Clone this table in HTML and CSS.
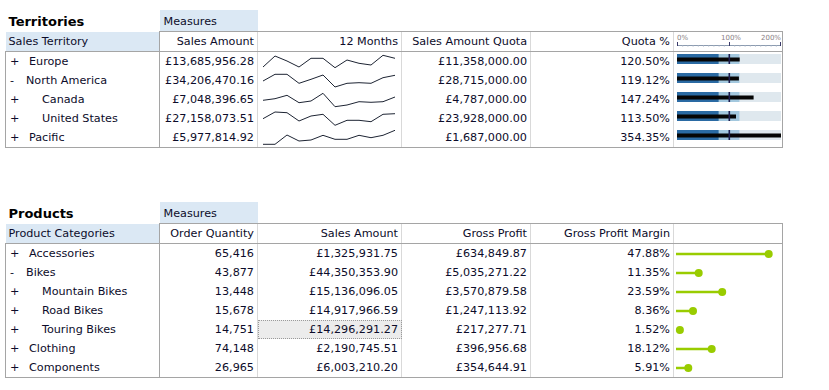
FILE: index.html
```html
<!DOCTYPE html>
<html lang="en">
<head>
    <meta charset="UTF-8">
    <meta name="viewport" content="width=device-width, initial-scale=1.0">
    <title>Territories and Products</title>
    <link rel="stylesheet" href="styles.css">
</head>
<body>

    <!-- Territories matrix -->
    <table class="report">
        <colgroup>
            <col class="c-label"><col class="c-first"><col class="c-wide"><col class="c-mid"><col class="c-pct"><col class="c-chart">
        </colgroup>
        <tr class="title-row">
            <td class="report-title">Territories</td>
            <td class="measures">Measures</td>
            <td colspan="4"></td>
        </tr>
        <tr class="head-row">
            <th class="dim">Sales Territory</th>
            <th class="first">Sales Amount</th>
            <th>12 Months</th>
            <th>Sales Amount Quota</th>
            <th>Quota %</th>
            <th class="chart last">
                <svg class="axis" width="109" height="19" viewBox="0 0 109 19">
                    <text x="3" y="7.5">0%</text>
                    <text x="57" y="7.5" text-anchor="middle">100%</text>
                    <text x="107" y="7.5" text-anchor="end">200%</text>
                    <line class="axis-line" x1="3" y1="13.5" x2="107" y2="13.5"/>
                    <path class="axis-tick" d="M3.5 10v4M55.5 10v4M106.5 10v4"/>
                    <path class="axis-minor" d="M8.7 13v2M13.9 13v2M19.1 13v2M24.3 13v2M29.5 13v2M34.7 13v2M39.9 13v2M45.1 13v2M50.3 13v2M60.7 13v2M65.9 13v2M71.1 13v2M76.3 13v2M81.5 13v2M86.7 13v2M91.9 13v2M97.1 13v2M102.3 13v2"/>
                </svg>
            </th>
        </tr>
        <tr>
            <td class="label"><span class="sign">+</span>Europe</td>
            <td class="first">£13,685,956.28</td>
            <td class="chart">
                <svg class="spark" width="144" height="19" viewBox="0 0 144 19"><polyline points="5,15 17,4 29,9 41,15 53,6.3 65,6.3 77,15.7 89,8 101,11.3 113,13 125,3.3 137,6.3"/></svg>
            </td>
            <td>£11,358,000.00</td>
            <td>120.50%</td>
            <td class="chart last">
                <svg class="bullet" width="109" height="19" viewBox="0 0 109 19">
                    <rect class="band-low" x="3" y="2" width="104" height="10"/>
                    <rect class="band-mid" x="3" y="2" width="62.4" height="10"/>
                    <rect class="band-high" x="3" y="2" width="41.6" height="10"/>
                    <rect class="value" x="3" y="5.5" width="62.7" height="4"/>
                    <rect class="target" x="54.5" y="2" width="1.6" height="10"/>
                </svg>
            </td>
        </tr>
        <tr>
            <td class="label"><span class="sign minus">-</span>North America</td>
            <td class="first">£34,206,470.16</td>
            <td class="chart">
                <svg class="spark" width="144" height="19" viewBox="0 0 144 19"><polyline points="5,10 17,3.3 29,3.3 41,12.3 53,8.3 65,4 77,16 89,12.3 101,11.7 113,12.3 125,6.7 137,4.3"/></svg>
            </td>
            <td>£28,715,000.00</td>
            <td>119.12%</td>
            <td class="chart last">
                <svg class="bullet" width="109" height="19" viewBox="0 0 109 19">
                    <rect class="band-low" x="3" y="2" width="104" height="10"/>
                    <rect class="band-mid" x="3" y="2" width="62.4" height="10"/>
                    <rect class="band-high" x="3" y="2" width="41.6" height="10"/>
                    <rect class="value" x="3" y="5.5" width="61.9" height="4"/>
                    <rect class="target" x="54.5" y="2" width="1.6" height="10"/>
                </svg>
            </td>
        </tr>
        <tr>
            <td class="label child"><span class="sign">+</span>Canada</td>
            <td class="first">£7,048,396.65</td>
            <td class="chart">
                <svg class="spark" width="144" height="19" viewBox="0 0 144 19"><polyline points="5,10.3 17,8.7 29,5.3 41,12.7 53,11 65,3.3 77,16.7 89,15 101,11.7 113,12.3 125,11.7 137,7"/></svg>
            </td>
            <td>£4,787,000.00</td>
            <td>147.24%</td>
            <td class="chart last">
                <svg class="bullet" width="109" height="19" viewBox="0 0 109 19">
                    <rect class="band-low" x="3" y="2" width="104" height="10"/>
                    <rect class="band-mid" x="3" y="2" width="62.4" height="10"/>
                    <rect class="band-high" x="3" y="2" width="41.6" height="10"/>
                    <rect class="value" x="3" y="5.5" width="76.6" height="4"/>
                    <rect class="target" x="54.5" y="2" width="1.6" height="10"/>
                </svg>
            </td>
        </tr>
        <tr>
            <td class="label child"><span class="sign">+</span>United States</td>
            <td class="first">£27,158,073.51</td>
            <td class="chart">
                <svg class="spark" width="144" height="19" viewBox="0 0 144 19"><polyline points="5,9.7 17,3 29,3.7 41,12 53,7 65,5.3 77,16.3 89,11.3 101,11.3 113,12.7 125,5.3 137,4.7"/></svg>
            </td>
            <td>£23,928,000.00</td>
            <td>113.50%</td>
            <td class="chart last">
                <svg class="bullet" width="109" height="19" viewBox="0 0 109 19">
                    <rect class="band-low" x="3" y="2" width="104" height="10"/>
                    <rect class="band-mid" x="3" y="2" width="62.4" height="10"/>
                    <rect class="band-high" x="3" y="2" width="41.6" height="10"/>
                    <rect class="value" x="3" y="5.5" width="59" height="4"/>
                    <rect class="target" x="54.5" y="2" width="1.6" height="10"/>
                </svg>
            </td>
        </tr>
        <tr class="end-row">
            <td class="label"><span class="sign">+</span>Pacific</td>
            <td class="first">£5,977,814.92</td>
            <td class="chart">
                <svg class="spark" width="144" height="19" viewBox="0 0 144 19"><polyline points="5,16.3 17,16.3 29,7 41,13 53,12 65,7.3 77,11.3 89,11.3 101,7.3 113,9.7 125,7.3 137,2.3"/></svg>
            </td>
            <td>£1,687,000.00</td>
            <td>354.35%</td>
            <td class="chart last">
                <svg class="bullet" width="109" height="19" viewBox="0 0 109 19">
                    <rect class="band-low" x="3" y="2" width="104" height="10"/>
                    <rect class="band-mid" x="3" y="2" width="62.4" height="10"/>
                    <rect class="band-high" x="3" y="2" width="41.6" height="10"/>
                    <rect class="value" x="3" y="5.5" width="104" height="4"/>
                    <rect class="target" x="54.5" y="2" width="1.6" height="10"/>
                </svg>
            </td>
        </tr>
    </table>

    <!-- Products matrix -->
    <table class="report">
        <colgroup>
            <col class="c-label"><col class="c-first"><col class="c-wide"><col class="c-mid"><col class="c-pct"><col class="c-chart">
        </colgroup>
        <tr class="title-row">
            <td class="report-title">Products</td>
            <td class="measures">Measures</td>
            <td colspan="4"></td>
        </tr>
        <tr class="head-row">
            <th class="dim">Product Categories</th>
            <th class="first">Order Quantity</th>
            <th>Sales Amount</th>
            <th>Gross Profit</th>
            <th>Gross Profit Margin</th>
            <th class="chart last"></th>
        </tr>
        <tr>
            <td class="label"><span class="sign">+</span>Accessories</td>
            <td class="first">65,416</td>
            <td>£1,325,931.75</td>
            <td>£634,849.87</td>
            <td>47.88%</td>
            <td class="chart last">
                <svg class="pop" width="109" height="19" viewBox="0 0 109 19"><line x1="2" y1="10" x2="94.7" y2="10"/><circle cx="94.7" cy="10" r="4"/></svg>
            </td>
        </tr>
        <tr>
            <td class="label"><span class="sign minus">-</span>Bikes</td>
            <td class="first">43,877</td>
            <td>£44,350,353.90</td>
            <td>£5,035,271.22</td>
            <td>11.35%</td>
            <td class="chart last">
                <svg class="pop" width="109" height="19" viewBox="0 0 109 19"><line x1="2" y1="10" x2="24.7" y2="10"/><circle cx="24.7" cy="10" r="4"/></svg>
            </td>
        </tr>
        <tr>
            <td class="label child"><span class="sign">+</span>Mountain Bikes</td>
            <td class="first">13,448</td>
            <td>£15,136,096.05</td>
            <td>£3,570,879.58</td>
            <td>23.59%</td>
            <td class="chart last">
                <svg class="pop" width="109" height="19" viewBox="0 0 109 19"><line x1="2" y1="10" x2="48.2" y2="10"/><circle cx="48.2" cy="10" r="4"/></svg>
            </td>
        </tr>
        <tr>
            <td class="label child"><span class="sign">+</span>Road Bikes</td>
            <td class="first">15,678</td>
            <td>£14,917,966.59</td>
            <td>£1,247,113.92</td>
            <td>8.36%</td>
            <td class="chart last">
                <svg class="pop" width="109" height="19" viewBox="0 0 109 19"><line x1="2" y1="10" x2="19" y2="10"/><circle cx="19" cy="10" r="4"/></svg>
            </td>
        </tr>
        <tr>
            <td class="label child"><span class="sign">+</span>Touring Bikes</td>
            <td class="first">14,751</td>
            <td class="focus">£14,296,291.27</td>
            <td>£217,277.71</td>
            <td>1.52%</td>
            <td class="chart last">
                <svg class="pop" width="109" height="19" viewBox="0 0 109 19"><line x1="2" y1="10" x2="5.9" y2="10"/><circle cx="5.9" cy="10" r="4"/></svg>
            </td>
        </tr>
        <tr>
            <td class="label"><span class="sign">+</span>Clothing</td>
            <td class="first">74,148</td>
            <td>£2,190,745.51</td>
            <td>£396,956.68</td>
            <td>18.12%</td>
            <td class="chart last">
                <svg class="pop" width="109" height="19" viewBox="0 0 109 19"><line x1="2" y1="10" x2="37.7" y2="10"/><circle cx="37.7" cy="10" r="4"/></svg>
            </td>
        </tr>
        <tr class="end-row">
            <td class="label"><span class="sign">+</span>Components</td>
            <td class="first">26,965</td>
            <td>£6,003,210.20</td>
            <td>£354,644.91</td>
            <td>5.91%</td>
            <td class="chart last">
                <svg class="pop" width="109" height="19" viewBox="0 0 109 19"><line x1="2" y1="10" x2="14.3" y2="10"/><circle cx="14.3" cy="10" r="4"/></svg>
            </td>
        </tr>
    </table>

</body>
</html>
```

FILE: styles.css
```css
body {
    margin: 0;
    padding: 10px 0 0 5px;
    font-family: "DejaVu Sans", Tahoma, sans-serif;
    font-size: 11.2px;
    color: #0c0c2a;
    background-color: #ffffff;
}

.report {
    border-collapse: collapse;
    table-layout: fixed;
    width: 777px;
}

.report + .report {
    margin-top: 54px;
}

.c-label { width: 154px; }
.c-first { width: 98px; }
.c-wide { width: 144px; }
.c-mid { width: 129px; }
.c-pct { width: 143px; }
.c-chart { width: 109px; }

.report td,
.report th {
    height: 19px;
    padding: 0 3px;
    line-height: 19px;
    font-weight: normal;
    text-align: right;
    white-space: nowrap;
    overflow: hidden;
    border-left: 1px solid #d9d9d9;
}

/* title + "Measures" caption row */
.report .title-row td {
    height: 18px;
    padding-top: 3px;
    line-height: 18px;
    vertical-align: top;
    border-left: none;
    text-align: left;
}

.report .title-row .report-title {
    font-size: 13px;
    font-weight: bold;
    color: #000;
}

.report .title-row .measures {
    background-color: #dbe8f4;
    padding-left: 4px;
}

/* column headers */
.head-row th {
    border-top: 1px solid #a5a5a5;
    border-bottom: 1px solid #a5a5a5;
}

.head-row th.dim {
    background-color: #dbe8f4;
    border-top: none;
    border-left: none;
    text-align: left;
}

.report .first {
    border-left: 1px solid #a5a5a5;
}

.report .last {
    border-right: 1px solid #a5a5a5;
}

.report .label {
    text-align: left;
    padding-left: 4px;
    border-left: 1px solid #a5a5a5;
}

.label.child .sign {
    width: 32px;
}

.sign {
    display: inline-block;
    width: 19px;
}

.sign.minus {
    width: 16px;
}

.end-row td {
    border-bottom: 1px solid #a5a5a5;
}

.report .chart {
    padding: 0;
}

.chart svg {
    display: block;
}

.focus {
    background-color: #ececec;
    outline: 1px dotted #9a9a9a;
    outline-offset: -1px;
}

/* bullet axis */
.axis text {
    font-size: 7px;
    fill: #8a7f86;
}

.axis-line {
    stroke: #8b9bb0;
    stroke-width: 1;
}

.axis-tick {
    stroke: #3a3a6a;
    stroke-width: 1;
}

.axis-minor {
    stroke: #b0b8c8;
    stroke-width: 0.6;
}

/* bullet bars */
.band-low { fill: #dfe8ee; }
.band-mid { fill: #a3c8de; }
.band-high { fill: #2a6aa3; }
.value { fill: #050505; }
.target { fill: #1c1c4e; }

/* sparklines */
.spark polyline {
    fill: none;
    stroke: #1d2433;
    stroke-width: 1;
}

/* lollipops */
.pop line {
    stroke: #9c0;
    stroke-width: 2.5;
}

.pop circle {
    fill: #9c0;
}
```
